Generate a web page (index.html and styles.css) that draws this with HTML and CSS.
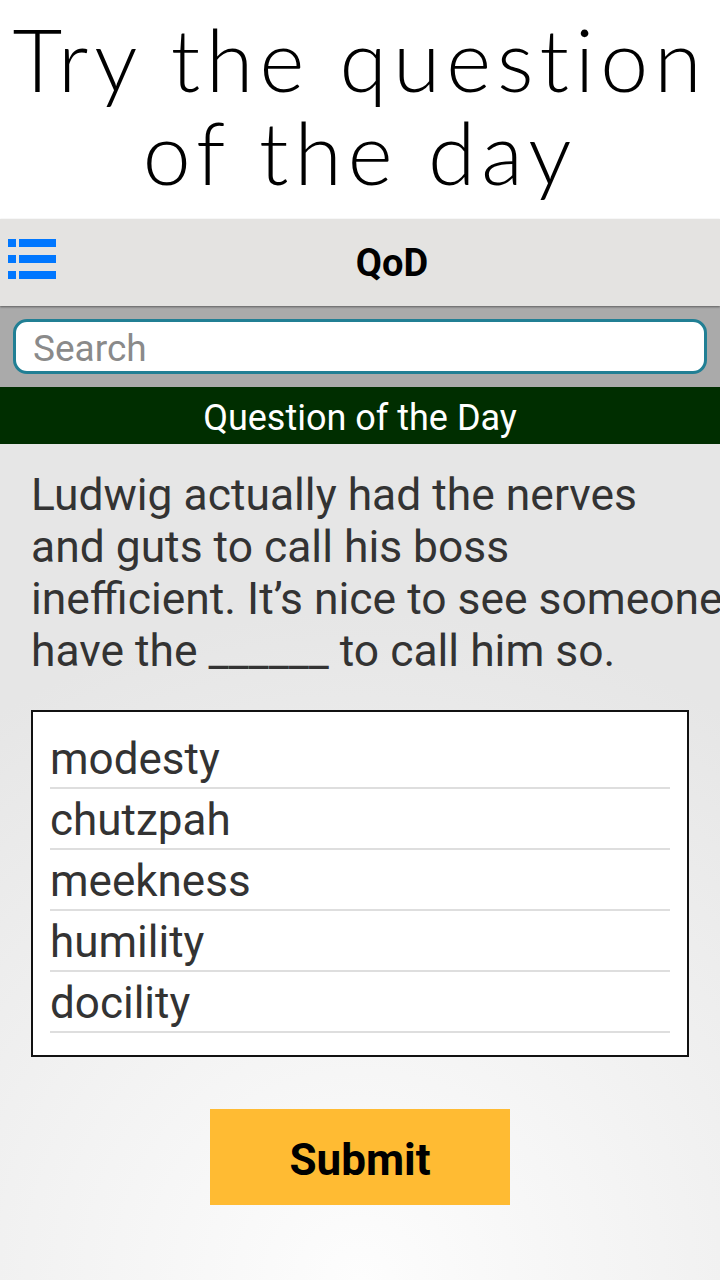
FILE: index.html
```html
<!DOCTYPE html>
<html>
<head>
<meta charset="utf-8">
<link rel="stylesheet" href="styles.css">
</head>
<body>
<div class="hero">
  <div class="hero-line">Try the question</div>
  <div class="hero-line">of the day</div>
</div>
<div class="appbar">
  <div class="menu">
    <svg width="48" height="40" viewBox="0 0 48 40">
      <rect x="0" y="0" width="8" height="8" fill="#0077ff"/>
      <rect x="11" y="0" width="37" height="8" fill="#0077ff"/>
      <rect x="0" y="16" width="8" height="8" fill="#0077ff"/>
      <rect x="11" y="16" width="37" height="8" fill="#0077ff"/>
      <rect x="0" y="32" width="8" height="8" fill="#0077ff"/>
      <rect x="11" y="32" width="37" height="8" fill="#0077ff"/>
    </svg>
  </div>
  <div class="appbar-title">QoD</div>
</div>
<div class="searchbar">
  <input class="search" type="text" placeholder="Search">
</div>
<div class="section-title">Question of the Day</div>
<main class="content">
  <p class="question">Ludwig actually had the nerves<br>and guts to call his boss<br>inefficient. It’s nice to see someone<br>have the ______ to call him so.</p>
  <ul class="options">
    <li>modesty</li>
    <li>chutzpah</li>
    <li>meekness</li>
    <li>humility</li>
    <li>docility</li>
  </ul>
  <button class="submit">Submit</button>
</main>
</body>
</html>
```

FILE: styles.css
```css
html, body {
  margin: 0;
  padding: 0;
}
body {
  width: 720px;
  height: 1280px;
  overflow: hidden;
  font-family: Roboto, "Liberation Sans", sans-serif;
  background: #e6e6e6;
  display: flex;
  flex-direction: column;
}
.hero {
  height: 219px;
  box-sizing: border-box;
  padding-top: 12px;
  background: #ffffff;
  text-align: center;
  font-family: Lato, "DejaVu Sans", sans-serif;
  font-weight: 300;
  font-size: 86px;
  line-height: 93px;
  color: #000;
  letter-spacing: 6px;
}
.hero-line {
  white-space: nowrap;
}
.appbar {
  position: relative;
  z-index: 2;
  height: 87px;
  background: #e4e3e1;
  display: flex;
  align-items: center;
  box-shadow: 0 1px 2px rgba(0,0,0,0.45);
}
.menu {
  width: 64px;
  align-self: flex-start;
  box-sizing: border-box;
  padding: 20px 0 0 8px;
}
.menu svg {
  display: block;
}
.appbar-title {
  flex: 1;
  text-align: center;
  font-weight: 700;
  font-size: 38px;
  color: #000;
}
.searchbar {
  height: 81px;
  box-sizing: border-box;
  padding: 13px;
  background: #aaaaaa;
}
.search {
  display: block;
  width: 100%;
  height: 55px;
  box-sizing: border-box;
  margin: 0;
  border: 3px solid #217f94;
  border-radius: 14px;
  background: #fff;
  padding: 4px 0 0 17px;
  font-family: Roboto, "Liberation Sans", sans-serif;
  font-size: 37px;
  color: #333;
  outline: none;
}
.search::placeholder {
  color: #8a8a8a;
}
.section-title {
  height: 57px;
  box-sizing: border-box;
  padding-top: 6px;
  line-height: 51px;
  background: #002e00;
  color: #fff;
  text-align: center;
  font-size: 36px;
}
.content {
  flex: 1;
  padding-top: 25px;
  background: radial-gradient(ellipse 95% 80% at 50% 100%, #fdfdfd 0%, #f4f4f4 40%, #e6e6e6 100%);
  display: flex;
  flex-direction: column;
  align-items: center;
}
.question {
  align-self: stretch;
  margin: 0;
  padding-left: 31px;
  font-size: 44.4px;
  line-height: 52px;
  color: #333;
  white-space: nowrap;
  overflow: hidden;
}
.options {
  list-style: none;
  margin: 33px 0 0 0;
  width: 658px;
  box-sizing: border-box;
  border: 2px solid #111;
  background: #fff;
  padding: 16px 17px 22px 17px;
}
.options li {
  height: 61px;
  box-sizing: border-box;
  padding-top: 3px;
  line-height: 56px;
  border-bottom: 2px solid #dedede;
  font-size: 44px;
  color: #333;
}
.submit {
  margin-top: 52px;
  width: 300px;
  height: 96px;
  border: none;
  background: #ffbb33;
  font-family: Roboto, "Liberation Sans", sans-serif;
  font-weight: 700;
  font-size: 44px;
  color: #000;
  padding: 6px 0 0 0;
}
```
